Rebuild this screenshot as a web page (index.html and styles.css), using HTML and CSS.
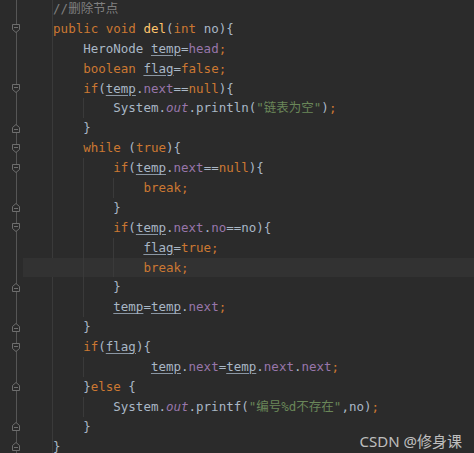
FILE: index.html
```html
<!DOCTYPE html>
<html lang="zh-CN">
<head>
    <meta charset="UTF-8">
    <meta name="viewport" content="width=device-width, initial-scale=1.0">
    <title>HeroNode del</title>
    <link rel="stylesheet" href="styles.css">
</head>
<body>
    <div class="editor">
        <div class="row"><span class="gut"></span><div class="code"><i class="ind"></i><span class="cm">//删除节点</span></div></div>
        <div class="row"><span class="gut"><svg class="fold" viewBox="0 0 10 11"><path d="M1.5 1.5H8.5V6.5L5 9.5L1.5 6.5Z"/><path d="M3 4.5H7"/></svg></span><div class="code"><i class="ind"></i><span class="kw">public void </span><span class="fn">del</span>(<span class="kw">int </span>no){</div></div>
        <div class="row"><span class="gut"></span><div class="code"><i class="ind"></i><i class="ind"></i>HeroNode <u>temp</u>=<span class="fd">head</span><span class="kw">;</span></div></div>
        <div class="row"><span class="gut"></span><div class="code"><i class="ind"></i><i class="ind"></i><span class="kw">boolean </span><u>flag</u>=<span class="kw">false;</span></div></div>
        <div class="row"><span class="gut"><svg class="fold" viewBox="0 0 10 11"><path d="M1.5 1.5H8.5V6.5L5 9.5L1.5 6.5Z"/><path d="M3 4.5H7"/></svg></span><div class="code"><i class="ind"></i><i class="ind"></i><span class="kw">if</span>(<u>temp</u>.<span class="fd">next</span>==<span class="kw">null</span>){</div></div>
        <div class="row"><span class="gut"></span><div class="code"><i class="ind"></i><i class="ind"></i><i class="ind g"></i>System.<span class="fd it">out</span>.println(<span class="str">"链表为空"</span>)<span class="kw">;</span></div></div>
        <div class="row"><span class="gut"><svg class="fold" viewBox="0 0 10 11"><path d="M1.5 9.5H8.5V4.5L5 1.5L1.5 4.5Z"/><path d="M3 6.5H7"/></svg></span><div class="code"><i class="ind"></i><i class="ind"></i>}</div></div>
        <div class="row"><span class="gut"><svg class="fold" viewBox="0 0 10 11"><path d="M1.5 1.5H8.5V6.5L5 9.5L1.5 6.5Z"/><path d="M3 4.5H7"/></svg></span><div class="code"><i class="ind"></i><i class="ind"></i><span class="kw">while </span>(<span class="kw">true</span>){</div></div>
        <div class="row"><span class="gut"><svg class="fold" viewBox="0 0 10 11"><path d="M1.5 1.5H8.5V6.5L5 9.5L1.5 6.5Z"/><path d="M3 4.5H7"/></svg></span><div class="code"><i class="ind"></i><i class="ind"></i><i class="ind g"></i><span class="kw">if</span>(<u>temp</u>.<span class="fd">next</span>==<span class="kw">null</span>){</div></div>
        <div class="row"><span class="gut"></span><div class="code"><i class="ind"></i><i class="ind"></i><i class="ind g"></i><i class="ind g"></i><span class="kw">break;</span></div></div>
        <div class="row"><span class="gut"><svg class="fold" viewBox="0 0 10 11"><path d="M1.5 9.5H8.5V4.5L5 1.5L1.5 4.5Z"/><path d="M3 6.5H7"/></svg></span><div class="code"><i class="ind"></i><i class="ind"></i><i class="ind g"></i>}</div></div>
        <div class="row"><span class="gut"><svg class="fold" viewBox="0 0 10 11"><path d="M1.5 1.5H8.5V6.5L5 9.5L1.5 6.5Z"/><path d="M3 4.5H7"/></svg></span><div class="code"><i class="ind"></i><i class="ind"></i><i class="ind g"></i><span class="kw">if</span>(<u>temp</u>.<span class="fd">next</span>.<span class="fd">no</span>==no){</div></div>
        <div class="row"><span class="gut"></span><div class="code"><i class="ind"></i><i class="ind"></i><i class="ind g"></i><i class="ind g"></i><u>flag</u>=<span class="kw">true;</span></div></div>
        <div class="row current"><span class="gut"></span><div class="code"><i class="ind"></i><i class="ind"></i><i class="ind g"></i><i class="ind g"></i><span class="kw">break;</span></div></div>
        <div class="row"><span class="gut"><svg class="fold" viewBox="0 0 10 11"><path d="M1.5 9.5H8.5V4.5L5 1.5L1.5 4.5Z"/><path d="M3 6.5H7"/></svg></span><div class="code"><i class="ind"></i><i class="ind"></i><i class="ind g"></i>}</div></div>
        <div class="row"><span class="gut"></span><div class="code"><i class="ind"></i><i class="ind"></i><i class="ind g"></i><u>temp</u>=<u>temp</u>.<span class="fd">next</span><span class="kw">;</span></div></div>
        <div class="row"><span class="gut"><svg class="fold" viewBox="0 0 10 11"><path d="M1.5 9.5H8.5V4.5L5 1.5L1.5 4.5Z"/><path d="M3 6.5H7"/></svg></span><div class="code"><i class="ind"></i><i class="ind"></i>}</div></div>
        <div class="row"><span class="gut"><svg class="fold" viewBox="0 0 10 11"><path d="M1.5 1.5H8.5V6.5L5 9.5L1.5 6.5Z"/><path d="M3 4.5H7"/></svg></span><div class="code"><i class="ind"></i><i class="ind"></i><span class="kw">if</span>(<u>flag</u>){</div></div>
        <div class="row"><span class="gut"></span><div class="code"><i class="ind"></i><i class="ind"></i><i class="ind g"></i>     <u>temp</u>.<span class="fd">next</span>=<u>temp</u>.<span class="fd">next</span>.<span class="fd">next</span><span class="kw">;</span></div></div>
        <div class="row"><span class="gut"><svg class="fold" viewBox="0 0 10 11"><path d="M1.5 9.5H8.5V4.5L5 1.5L1.5 4.5Z"/><path d="M3 6.5H7"/></svg></span><div class="code"><i class="ind"></i><i class="ind"></i>}<span class="kw">else </span>{</div></div>
        <div class="row"><span class="gut"></span><div class="code"><i class="ind"></i><i class="ind"></i><i class="ind g"></i>System.<span class="fd it">out</span>.printf(<span class="str">"编号%d不存在"</span>,no)<span class="kw">;</span></div></div>
        <div class="row"><span class="gut"><svg class="fold" viewBox="0 0 10 11"><path d="M1.5 9.5H8.5V4.5L5 1.5L1.5 4.5Z"/><path d="M3 6.5H7"/></svg></span><div class="code"><i class="ind"></i><i class="ind"></i>}</div></div>
        <div class="row"><span class="gut"><svg class="fold" viewBox="0 0 10 11"><path d="M1.5 9.5H8.5V4.5L5 1.5L1.5 4.5Z"/><path d="M3 6.5H7"/></svg></span><div class="code"><i class="ind"></i>}</div></div>

        <div class="watermark">CSDN @修身课</div>
    </div>
</body>
</html>
```

FILE: styles.css
```css
* {
    margin: 0;
    padding: 0;
    box-sizing: border-box;
}

body {
    background-color: #2b2b2b;
    overflow: hidden;
}

.editor {
    position: relative;
    height: 454px;
    margin-top: -1px;
    font-family: 'DejaVu Sans Mono', 'Noto Sans CJK SC', monospace;
    font-size: 12.5px;
    color: #a9b7c6;
    /* fold outline line + first indent guide */
    background-image:
        linear-gradient(#565656, #565656),
        linear-gradient(#3a3a3a, #3a3a3a);
    background-repeat: no-repeat;
    background-size: 1px 100%, 1px 100%;
    background-position: 16px 0, 52px 0;
}

.row {
    display: flex;
    height: 19.9px;
    line-height: 19.9px;
}

.gut {
    flex: none;
    width: 23px;
    display: flex;
    align-items: center;
    padding-left: 11px;
}

.fold {
    width: 10px;
    height: 11px;
    fill: #2b2b2b;
    stroke: #6e6e6e;
    stroke-width: 1;
}

.code {
    flex: 1;
    white-space: pre;
}

.row.current .code {
    background-color: #323232;
}

.ind {
    display: inline-block;
    width: 4ch;
    height: 19.9px;
    vertical-align: top;
}

.ind.g {
    box-shadow: inset 1px 0 0 #3a3a3a;
}

.kw {
    color: #cc7832;
}

.fn {
    color: #ffc66d;
}

.fd {
    color: #9876aa;
}

.it {
    font-style: italic;
}

.str {
    color: #6a8759;
}

.cm {
    color: #808080;
}

u {
    text-decoration: underline;
    text-decoration-color: #8a96a3;
    text-underline-offset: 2px;
}

.watermark {
    position: absolute;
    right: 12px;
    bottom: 2px;
    font-family: 'Noto Sans', 'Noto Sans CJK SC', sans-serif;
    font-size: 15px;
    color: rgba(225, 225, 225, 0.82);
    line-height: 20px;
}
```
